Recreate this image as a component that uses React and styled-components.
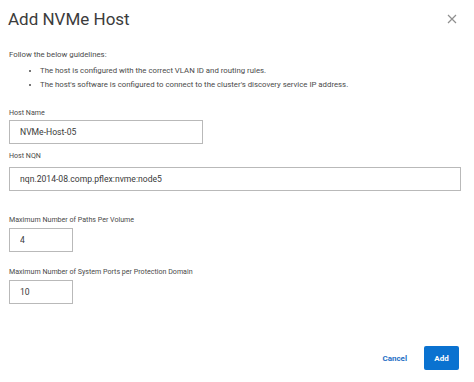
import React from "react";
import styled, { createGlobalStyle } from "styled-components";

const GlobalStyle = createGlobalStyle`
  html, body {
    margin: 0;
    padding: 0;
    background: #ffffff;
  }
  body {
    font-family: Roboto, "Liberation Sans", Arial, sans-serif;
    color: #333333;
  }
`;

const Dialog = styled.div`
  width: 474px;
  height: 382px;
  box-sizing: border-box;
  padding: 9px 14px 0 9px;
  display: flex;
  flex-direction: column;
  background: #fff;
`;

const Header = styled.div`
  display: flex;
  align-items: flex-start;
  justify-content: space-between;
  height: 40px;
`;

const Title = styled.h1`
  margin: 0 0 0 -1px;
  font-size: 17px;
  line-height: 20px;
  font-weight: 400;
  color: #3c3c3c;
`;

const CloseButton = styled.button`
  border: none;
  background: none;
  padding: 0;
  margin: 5px 3px 0 0;
  width: 10px;
  height: 10px;
  display: flex;
  cursor: pointer;
`;

const Intro = styled.p`
  margin: 0;
  font-size: 7.8px;
  line-height: 12px;
  color: #4a4a4a;
`;

const Guidelines = styled.ul`
  margin: 3px 0 0 0;
  padding-left: 31px;
  font-size: 7.8px;
  line-height: 14px;
  color: #4a4a4a;

  li::marker {
    font-size: 8px;
  }
`;

const Field = styled.div`
  display: flex;
  flex-direction: column;
  margin-top: ${(p) => p.$top}px;
`;

const Label = styled.label`
  font-size: 7.1px;
  line-height: 10px;
  color: #4a4a4a;
  margin-bottom: ${(p) => p.$gap}px;
`;

const Input = styled.input`
  box-sizing: border-box;
  width: ${(p) => p.$width}px;
  height: 24px;
  border: 1px solid #b9b9b9;
  border-radius: 0;
  padding: 0 10px;
  font-family: Roboto, "Liberation Sans", Arial, sans-serif;
  font-size: 8.6px;
  color: #3a3a3a;
  outline: none;
  background: #fff;
`;

const Footer = styled.div`
  margin-top: auto;
  margin-bottom: 12px;
  display: flex;
  justify-content: flex-end;
  align-items: center;
  gap: 17px;
  padding-right: 1px;
`;

const TextButton = styled.button`
  border: none;
  background: none;
  padding: 0;
  font-family: Roboto, "Liberation Sans", Arial, sans-serif;
  font-size: 8px;
  font-weight: 700;
  color: #1f6fc5;
  cursor: pointer;
`;

const PrimaryButton = styled.button`
  border: none;
  border-radius: 2px;
  width: 35px;
  height: 24px;
  background: #0a72d0;
  color: #fff;
  font-family: Roboto, "Liberation Sans", Arial, sans-serif;
  font-size: 8px;
  font-weight: 700;
  cursor: pointer;
`;

export default function App() {
  return (
    <>
      <GlobalStyle />
      <Dialog>
        <Header>
          <Title>Add NVMe Host</Title>
          <CloseButton aria-label="Close">
            <svg width="10" height="10" viewBox="0 0 10 10">
              <path d="M1 1 L9 9 M9 1 L1 9" stroke="#8f8f8f" strokeWidth="1.2" />
            </svg>
          </CloseButton>
        </Header>
        <Intro>Follow the below guidelines:</Intro>
        <Guidelines>
          <li>The host is configured with the correct VLAN ID and routing rules.</li>
          <li>The host's software is configured to connect to the cluster's discovery service IP address.</li>
        </Guidelines>

        <Field $top={16}>
          <Label $gap={2}>Host Name</Label>
          <Input $width={194} defaultValue="NVMe-Host-05" />
        </Field>
        <Field $top={7}>
          <Label $gap={6}>Host NQN</Label>
          <Input $width={452} defaultValue="nqn.2014-08.comp.pflex:nvme:node5" />
        </Field>
        <Field $top={24}>
          <Label $gap={3}>Maximum Number of Paths Per Volume</Label>
          <Input $width={64} defaultValue="4" />
        </Field>
        <Field $top={15}>
          <Label $gap={3}>Maximum Number of System Ports per Protection Domain</Label>
          <Input $width={64} defaultValue="10" />
        </Field>

        <Footer>
          <TextButton>Cancel</TextButton>
          <PrimaryButton>Add</PrimaryButton>
        </Footer>
      </Dialog>
    </>
  );
}
